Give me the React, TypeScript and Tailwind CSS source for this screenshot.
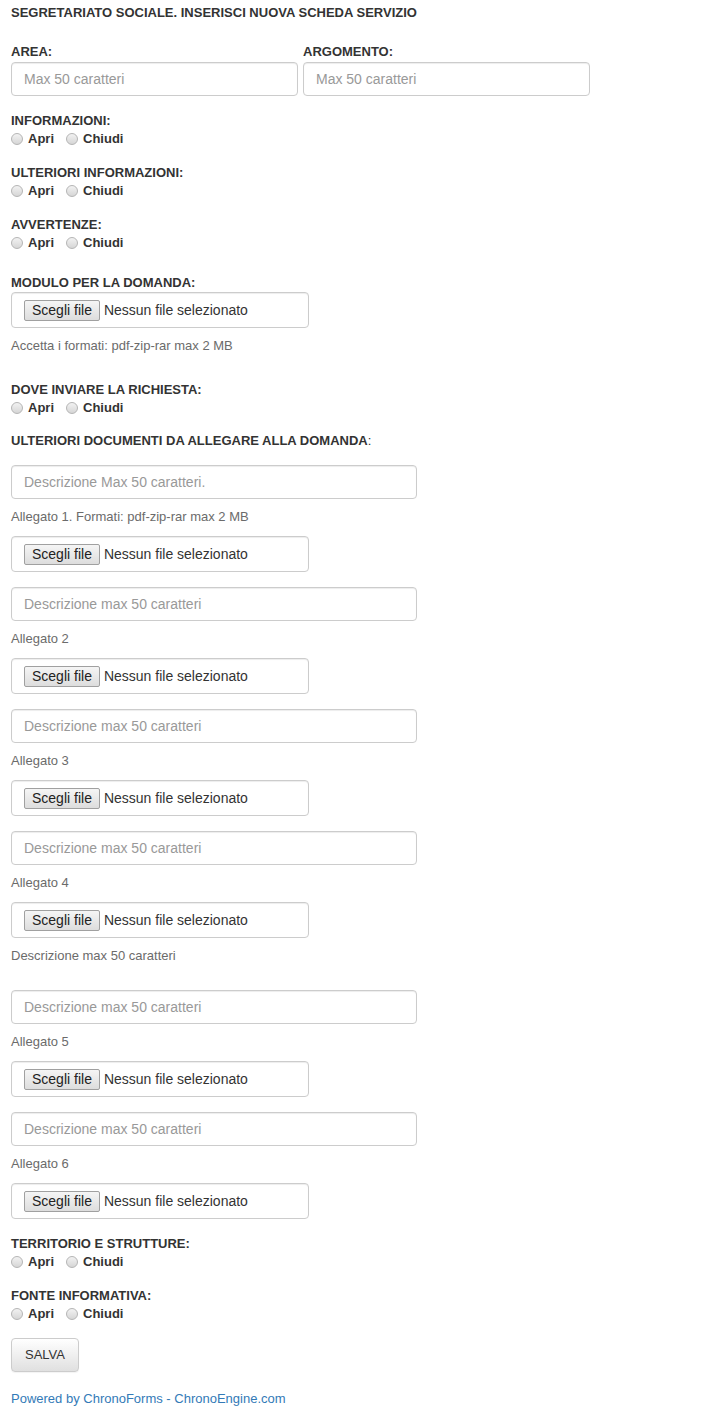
import React from 'react';

const font = { fontFamily: '"Liberation Sans", Arial, Helvetica, sans-serif' };

const Label: React.FC<{ text: string; className?: string; colon?: boolean }> = ({ text, className = '', colon }) => (
  <div className={`h-[18px] flex items-center text-[13px] font-bold text-[#333] leading-none ${className}`}>
    {text}
    {colon && <span className="font-normal">:</span>}
  </div>
);

const Radio: React.FC = () => (
  <span className="inline-block w-[12px] h-[12px] translate-y-[1px] rounded-full border border-[#b5b5b5] bg-gradient-to-b from-[#f2f2f2] to-[#d6d6d6]" />
);

const RadioRow: React.FC = () => (
  <div className="h-[18px] flex items-center text-[13px] font-bold text-[#333] leading-none">
    <Radio />
    <span className="ml-[5px]">Apri</span>
    <span className="ml-[12px] flex"><Radio /></span>
    <span className="ml-[5px]">Chiudi</span>
  </div>
);

const TextInput: React.FC<{ placeholder: string; className?: string }> = ({ placeholder, className = '' }) => (
  <input
    type="text"
    placeholder={placeholder}
    className={`h-[34px] px-[12px] border border-[#ccc] rounded-[4px] text-[14px] text-[#555] placeholder:text-[#999] shadow-[inset_0_1px_1px_rgba(0,0,0,0.075)] outline-none ${className}`}
    style={font}
  />
);

const FileBox: React.FC<{ className?: string }> = ({ className = '' }) => (
  <div className={`w-[298px] h-[36px] pl-[12px] flex items-center border border-[#ccc] rounded-[4px] shadow-[inset_0_1px_1px_rgba(0,0,0,0.075)] ${className}`}>
    <span className="h-[21px] px-[7px] flex items-center border border-[#a0a0a0] rounded-[2px] bg-gradient-to-b from-[#f5f5f5] to-[#dddddd] text-[14px] text-[#222] leading-none">
      Scegli file
    </span>
    <span className="ml-[4px] text-[14px] text-[#333] leading-none">Nessun file selezionato</span>
  </div>
);

const Help: React.FC<{ text: string; className?: string }> = ({ text, className = '' }) => (
  <div className={`h-[18px] flex items-center text-[13px] text-[#6b6b6b] leading-none ${className}`}>{text}</div>
);

export default function App() {
  return (
    <div className="w-[728px] min-h-[1416px] bg-white pl-[11px]" style={font}>
      <div className="h-[24px] flex items-center text-[13px] font-bold text-[#333] leading-none">
        SEGRETARIATO SOCIALE. INSERISCI NUOVA SCHEDA SERVIZIO
      </div>

      <div className="mt-[18px] flex gap-[5px]">
        <div className="flex flex-col">
          <Label text="AREA:" />
          <TextInput placeholder="Max 50 caratteri" className="mt-[2px] w-[287px]" />
        </div>
        <div className="flex flex-col">
          <Label text="ARGOMENTO:" />
          <TextInput placeholder="Max 50 caratteri" className="mt-[2px] w-[287px]" />
        </div>
      </div>

      <Label text="INFORMAZIONI:" className="mt-[15px]" />
      <RadioRow />
      <Label text="ULTERIORI INFORMAZIONI:" className="mt-[16px]" />
      <RadioRow />
      <Label text="AVVERTENZE:" className="mt-[16px]" />
      <RadioRow />

      <Label text="MODULO PER LA DOMANDA:" className="mt-[22px]" />
      <FileBox className="mt-[1px]" />
      <Help text="Accetta i formati: pdf-zip-rar max 2 MB" className="mt-[8px]" />

      <Label text="DOVE INVIARE LA RICHIESTA:" className="mt-[26px]" />
      <RadioRow />

      <Label text="ULTERIORI DOCUMENTI DA ALLEGARE ALLA DOMANDA" colon className="mt-[15px]" />

      <div className="flex flex-col">
        <TextInput placeholder="Descrizione Max 50 caratteri." className="mt-[16px] w-[406px]" />
        <Help text="Allegato 1. Formati: pdf-zip-rar max 2 MB" className="mt-[8px]" />
        <FileBox className="mt-[11px]" />

        <TextInput placeholder="Descrizione max 50 caratteri" className="mt-[15px] w-[406px]" />
        <Help text="Allegato 2" className="mt-[8px]" />
        <FileBox className="mt-[11px]" />

        <TextInput placeholder="Descrizione max 50 caratteri" className="mt-[15px] w-[406px]" />
        <Help text="Allegato 3" className="mt-[8px]" />
        <FileBox className="mt-[11px]" />

        <TextInput placeholder="Descrizione max 50 caratteri" className="mt-[15px] w-[406px]" />
        <Help text="Allegato 4" className="mt-[8px]" />
        <FileBox className="mt-[11px]" />
        <Help text="Descrizione max 50 caratteri" className="mt-[8px]" />

        <TextInput placeholder="Descrizione max 50 caratteri" className="mt-[26px] w-[406px]" />
        <Help text="Allegato 5" className="mt-[8px]" />
        <FileBox className="mt-[11px]" />

        <TextInput placeholder="Descrizione max 50 caratteri" className="mt-[15px] w-[406px]" />
        <Help text="Allegato 6" className="mt-[8px]" />
        <FileBox className="mt-[11px]" />
      </div>

      <Label text="TERRITORIO E STRUTTURE:" className="mt-[15px]" />
      <RadioRow />
      <Label text="FONTE INFORMATIVA:" className="mt-[16px]" />
      <RadioRow />

      <button
        className="mt-[16px] w-[68px] h-[34px] border border-[#ccc] rounded-[4px] bg-gradient-to-b from-white to-[#e0e0e0] text-[13px] text-[#333] shadow-[0_1px_1px_rgba(0,0,0,0.05)]"
        style={font}
      >
        SALVA
      </button>

      <div className="mt-[17px] h-[18px] flex items-center text-[13px] text-[#337ab7] leading-none">
        Powered by ChronoForms - ChronoEngine.com
      </div>
    </div>
  );
}
